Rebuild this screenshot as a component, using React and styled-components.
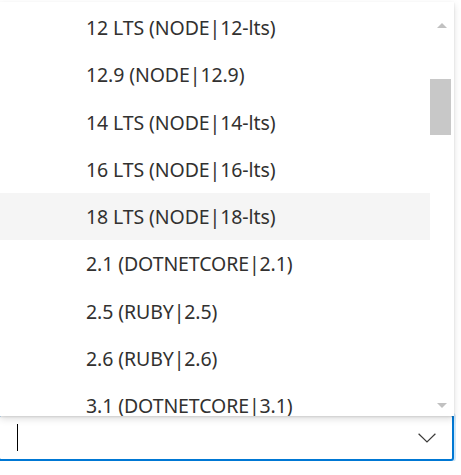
import { useState } from "react";
import styled, { createGlobalStyle } from "styled-components";

const GlobalStyle = createGlobalStyle`
  html, body {
    margin: 0;
    padding: 0;
    background: #ffffff;
    overflow: hidden;
  }
  body {
    font-family: "Noto Sans", "Open Sans", "Liberation Sans", sans-serif;
  }
`;

const options = [
  "12 LTS (NODE|12-lts)",
  "12.9 (NODE|12.9)",
  "14 LTS (NODE|14-lts)",
  "16 LTS (NODE|16-lts)",
  "18 LTS (NODE|18-lts)",
  "2.1 (DOTNETCORE|2.1)",
  "2.5 (RUBY|2.5)",
  "2.6 (RUBY|2.6)",
  "3.1 (DOTNETCORE|3.1)",
];

const App = () => {
  const [hovered, setHovered] = useState(4);

  return (
    <>
      <GlobalStyle />
      <Page>
        <Panel>
          <List>
            {options.map((label, index) => (
              <Option
                key={label}
                $hovered={index === hovered}
                onMouseEnter={() => setHovered(index)}
              >
                {label}
              </Option>
            ))}
          </List>
          <Scrollbar>
            <Arrow $dir="up" />
            <Track>
              <Thumb />
            </Track>
            <Arrow $dir="down" />
          </Scrollbar>
        </Panel>
        <ComboBox>
          <Caret />
          <svg width="18" height="10" viewBox="0 0 18 10">
            <polyline
              points="0.6,0.8 9,9 17.4,0.8"
              fill="none"
              stroke="#3b3a39"
              strokeWidth="1.2"
            />
          </svg>
        </ComboBox>
      </Page>
    </>
  );
};

const Page = styled.div`
  display: flex;
  flex-direction: column;
  width: 454px;
  padding-top: 2px;
`;

const Panel = styled.div`
  position: relative;
  z-index: 1;
  display: flex;
  height: 414px;
  margin-bottom: -2px;
  background: #ffffff;
  overflow: hidden;
  box-shadow: 0 3px 7px rgba(0, 0, 0, 0.13), 0 0.6px 1.8px rgba(0, 0, 0, 0.11);
`;

const List = styled.div`
  display: flex;
  flex-direction: column;
  width: 430px;
  padding-top: 2px;
`;

const Option = styled.div`
  flex: none;
  display: flex;
  align-items: center;
  height: 47.25px;
  padding-left: 86px;
  font-size: 19.5px;
  letter-spacing: -0.1px;
  color: #323130;
  background: ${(p) => (p.$hovered ? "#f5f5f5" : "transparent")};
  white-space: nowrap;
  cursor: default;
`;

const Scrollbar = styled.div`
  display: flex;
  flex-direction: column;
  align-items: center;
  width: 24px;
  padding: 21px 1px 8px 0;
  box-sizing: border-box;
`;

const Arrow = styled.div`
  width: 0;
  height: 0;
  border-left: 5.5px solid transparent;
  border-right: 5.5px solid transparent;
  ${(p) =>
    p.$dir === "up"
      ? "border-bottom: 5px solid #c1c1c1;"
      : "border-top: 5px solid #c1c1c1;"}
`;

const Track = styled.div`
  flex: 1;
  width: 21px;
  padding-top: 51px;
  margin-left: -2px;
`;

const Thumb = styled.div`
  height: 56px;
  background: #c8c8c8;
`;

const ComboBox = styled.div`
  display: flex;
  align-items: center;
  justify-content: space-between;
  height: 47px;
  margin-left: -2px;
  padding: 0 16px 0 17px;
  border: 2px solid #0078d4;
  border-radius: 3px;
  background: #ffffff;
  box-shadow: 0 0 0 2px rgba(0, 120, 212, 0.18);
  box-sizing: border-box;
  width: 456px;
`;

const Caret = styled.span`
  width: 1px;
  height: 27px;
  background: #000000;
`;

export default App;
